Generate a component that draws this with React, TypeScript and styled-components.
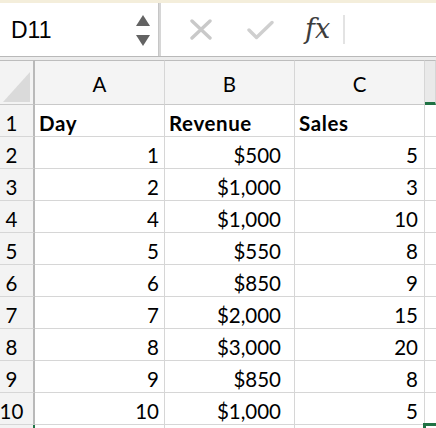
import React from 'react';
import styled, { createGlobalStyle } from 'styled-components';

const GlobalStyle = createGlobalStyle`
  * {
    box-sizing: border-box;
    margin: 0;
    padding: 0;
  }

  body, html {
    margin: 0;
    padding: 0;
    background: #fff;
    overflow: hidden;
  }

  body {
    font-family: Lato, 'Open Sans', sans-serif;
    color: #000;
  }
`;

const GREEN = '#1f7244';

const Sheet = styled.div`
  width: 436px;
  height: 428px;
  overflow: hidden;
  background: #fff;
`;

const FormulaBar = styled.div`
  display: flex;
  height: 57px;
  border-top: 3px solid #f4eedb;
  border-bottom: 1px solid #b9b9b9;
  background: #fff;
`;

const NameBox = styled.div`
  width: 158px;
  display: flex;
  align-items: center;
  justify-content: space-between;
  padding: 0 8px 0 11px;
`;

const NameText = styled.span`
  font-family: 'Liberation Sans', Arial, sans-serif;
  font-size: 23px;
  line-height: 1;
  margin-top: 2px;
`;

const Spinner = styled.div`
  display: flex;
  flex-direction: column;
  gap: 9px;
  margin-top: 2px;
`;

const BarDivider = styled.div`
  width: 3px;
  background: #d6d6d6;
  border-left: 1px solid #c6c6c6;
`;

const Tools = styled.div`
  flex: 1;
  display: flex;
  align-items: center;
  padding-left: 29px;
`;

const ToolIcon = styled.svg<{ $gap: number }>`
  display: block;
  margin-right: ${({ $gap }) => $gap}px;
`;

const Fx = styled.span`
  font-family: 'DejaVu Serif', 'Liberation Serif', serif;
  font-style: italic;
  font-size: 27px;
  line-height: 1;
  color: #3d3d3d;
  margin-top: -3px;
`;

const FxDivider = styled.div`
  width: 2px;
  height: 29px;
  margin-left: 13px;
  background: #e3e3e3;
`;

const Gap = styled.div`
  height: 3px;
  background: #ececec;
`;

const Row = styled.div<{ $height: number }>`
  display: flex;
  height: ${({ $height }) => $height}px;
`;

const Corner = styled.div`
  width: 35px;
  height: 100%;
  position: relative;
  background: #f3f3f3;
  border-top: 1px solid #bdbdbd;
  border-bottom: 1px solid #c9c9c9;
  border-right: 2px solid #b9b9b9;

  svg {
    position: absolute;
    left: 3px;
    bottom: 2px;
  }
`;

const ColHead = styled.div<{ $selected?: boolean }>`
  width: ${({ $selected }) => ($selected ? 'auto' : '130px')};
  flex: ${({ $selected }) => ($selected ? 1 : 'none')};
  height: 100%;
  display: flex;
  align-items: center;
  justify-content: center;
  padding-top: 4px;
  font-size: 20.5px;
  line-height: 1;
  background: ${({ $selected }) => ($selected ? '#e9e9e9' : '#f4f4f4')};
  border-top: 1px solid #bdbdbd;
  border-bottom: ${({ $selected }) => ($selected ? `3px solid ${GREEN}` : '1px solid #c9c9c9')};
  border-right: 1px solid #d6d6d6;
`;

const RowHead = styled.div<{ $selected?: boolean }>`
  width: 35px;
  height: 100%;
  display: flex;
  align-items: flex-end;
  justify-content: center;
  padding: 0 10px 3px 0;
  font-size: 20.5px;
  line-height: 1;
  background: #f3f3f3;
  border-bottom: 1px solid #d6d6d6;
  border-right: 2px solid ${({ $selected }) => ($selected ? GREEN : '#b9b9b9')};
`;

const Cell = styled.div<{ $align?: 'left' | 'right'; $bold?: boolean; $padRight?: number }>`
  width: 130px;
  height: 100%;
  display: flex;
  align-items: flex-end;
  justify-content: ${({ $align }) => ($align === 'left' ? 'flex-start' : 'flex-end')};
  padding: 0 ${({ $padRight = 5 }) => $padRight}px 3px 4px;
  font-size: 20.5px;
  line-height: 1;
  font-weight: ${({ $bold }) => ($bold ? 700 : 400)};
  letter-spacing: ${({ $bold }) => ($bold ? '0.6px' : '0')};
  border-bottom: 1px solid #d6d6d6;
  border-right: 1px solid #d6d6d6;
`;

const EdgeCell = styled.div<{ $active?: boolean }>`
  flex: 1;
  height: 100%;
  position: relative;
  border-bottom: 1px solid #d6d6d6;

  ${({ $active }) =>
    $active &&
    `
    &::after {
      content: '';
      position: absolute;
      top: -2px;
      left: -2px;
      width: 40px;
      height: 36px;
      border: 3px solid ${GREEN};
    }
  `}
`;

// right padding per column: currency column keeps a trailing gap
const padRight = [5, 13, 6];

const rows: (string | number)[][] = [
  [1, '$500', 5],
  [2, '$1,000', 3],
  [4, '$1,000', 10],
  [5, '$550', 8],
  [6, '$850', 9],
  [7, '$2,000', 15],
  [8, '$3,000', 20],
  [9, '$850', 8],
  [10, '$1,000', 5],
];

export default function App() {
  return (
    <>
      <GlobalStyle />
      <Sheet>
        <FormulaBar>
          <NameBox>
            <NameText>D11</NameText>
            <Spinner>
              <svg width="14" height="11" viewBox="0 0 14 11">
                <polygon points="7,0 14,11 0,11" fill="#636363" />
              </svg>
              <svg width="14" height="11" viewBox="0 0 14 11">
                <polygon points="0,0 14,0 7,11" fill="#636363" />
              </svg>
            </Spinner>
          </NameBox>
          <BarDivider />
          <Tools>
            <ToolIcon $gap={35} width="22" height="21" viewBox="0 0 22 21">
              <path d="M2 2 L20 19 M20 2 L2 19" stroke="#c9c9c9" strokeWidth="3.4" strokeLinecap="round" />
            </ToolIcon>
            <ToolIcon $gap={31} width="27" height="20" viewBox="0 0 27 20">
              <path d="M2 10 L9.5 17.5 L25 2.5" stroke="#cfcfcf" strokeWidth="3.4" fill="none" strokeLinecap="round" strokeLinejoin="round" />
            </ToolIcon>
            <Fx>fx</Fx>
            <FxDivider />
          </Tools>
        </FormulaBar>
        <Gap />
        <Row $height={45}>
          <Corner>
            <svg width="27" height="30" viewBox="0 0 27 30">
              <polygon points="0,30 27,0 27,30" fill="#dadada" />
            </svg>
          </Corner>
          <ColHead>A</ColHead>
          <ColHead>B</ColHead>
          <ColHead>C</ColHead>
          <ColHead $selected />
        </Row>
        <Row $height={32}>
          <RowHead>1</RowHead>
          <Cell $align="left" $bold>Day</Cell>
          <Cell $align="left" $bold>Revenue</Cell>
          <Cell $align="left" $bold>Sales</Cell>
          <EdgeCell />
        </Row>
        {rows.map((r, i) => (
          <Row key={i} $height={32}>
            <RowHead>{i + 2}</RowHead>
            {r.map((v, j) => (
              <Cell key={j} $padRight={padRight[j]}>{v}</Cell>
            ))}
            <EdgeCell />
          </Row>
        ))}
        <Row $height={32}>
          <RowHead $selected />
          <Cell />
          <Cell />
          <Cell />
          <EdgeCell $active />
        </Row>
      </Sheet>
    </>
  );
}
